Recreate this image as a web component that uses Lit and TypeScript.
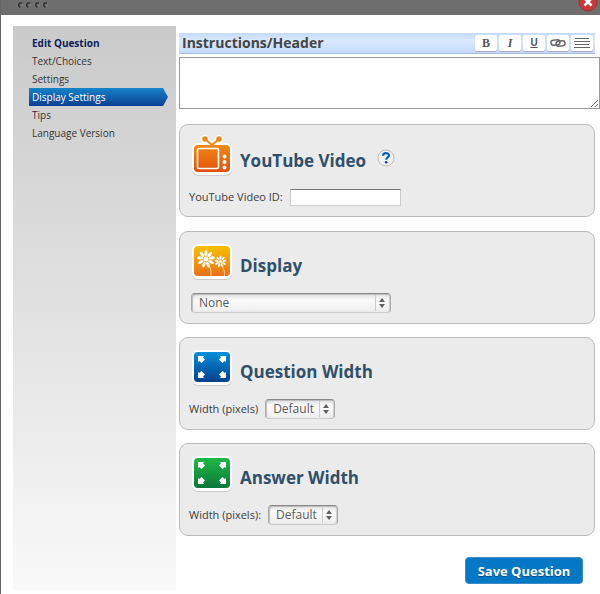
import { LitElement, html, css, svg } from "lit";
import { customElement, property } from "lit/decorators.js";

const arrow = svg`<path d="M0 0h6l-1 1.500 2 2-3.500 3.500-2-2-1.500 1z"/>`;

const tvIcon = html`<svg class="icon" width="42" height="42" viewBox="0 0 42 42" aria-hidden="true">
  <defs>
    <linearGradient id="tv" x1="0" y1="0" x2="0" y2="1">
      <stop offset="0" stop-color="#f08a12" /><stop offset="1" stop-color="#e0500f" />
    </linearGradient>
  </defs>
  <rect x="1" y="10" width="40" height="31" rx="6" fill="#cfcfcf" />
  <g fill="#fff" stroke="#fff">
    <rect x="1.500" y="8.500" width="39" height="31" rx="6" />
    <circle cx="14" cy="4.500" r="4" /><circle cx="28" cy="4.500" r="4" />
    <path d="M14 4l7 7 7-7" stroke-width="6" fill="none" />
  </g>
  <path d="M14 4l7 6 7-6" stroke="#ee8a14" stroke-width="2" fill="none" />
  <circle cx="14" cy="4" r="2.800" fill="#ee8a14" /><circle cx="28" cy="4" r="2.800" fill="#ee8a14" />
  <rect x="3" y="10" width="36" height="27" rx="4" fill="url(#tv)" />
  <rect x="6.500" y="13.500" width="21" height="20" rx="1.500" fill="none" stroke="#fff" stroke-width="1.600" />
  <g fill="#fff"><circle cx="33.500" cy="21.500" r="2" /><circle cx="33.500" cy="27" r="2" /><circle cx="33.500" cy="32.500" r="2" /></g>
</svg>`;

const petals = (n: number, r: number) =>
  Array.from({ length: n }, (_, i) => svg`<ellipse cx="0" cy=${-r * 0.66} rx=${r * 0.17} ry=${r * 0.34} transform="rotate(${(360 / n) * i})"/>`);

const plate = (id: string, top: string, bottom: string, art: unknown) => html`<svg
  class="icon" width="42" height="38" viewBox="0 0 42 38" aria-hidden="true">
  <defs>
    <linearGradient id=${id} x1="0" y1="0" x2="0" y2="1">
      <stop offset="0" stop-color=${top} /><stop offset="1" stop-color=${bottom} />
    </linearGradient>
  </defs>
  <rect x="1" y="2" width="40" height="34" rx="6" fill="#cacaca" />
  <rect x="1" y="0" width="40" height="35" rx="6" fill="#fff" />
  <rect x="3" y="2" width="36" height="30" rx="4" fill="url(#${id})" />
  ${art}
</svg>`;

const flowers = svg`<g fill="#fff">
  <g transform="translate(15 15)">${petals(9, 9)}<circle r="2.500"/></g>
  <g transform="translate(29.500 17.500)">${petals(9, 6)}<circle r="1.500"/></g>
</g>
<path d="M17 20c3 4 3 8 3 12M30.500 22c3 3 3 7 3 10" fill="none" stroke="#fbd9a4"/>`;

const corners = svg`<g fill="#fff">
  <g transform="translate(7 6)">${arrow}</g>
  <g transform="translate(35 6) rotate(90)">${arrow}</g>
  <g transform="translate(35 28) rotate(180)">${arrow}</g>
  <g transform="translate(7 28) rotate(270)">${arrow}</g>
</g>`;

const displayIcon = plate("display", "#f8c000", "#e8701a", flowers);
const questionIcon = plate("question", "#058fdc", "#02408c", corners);
const answerIcon = plate("answer", "#1fb847", "#0c7838", corners);

@customElement("pick-list")
export class PickList extends LitElement {
  @property() value = "";
  @property() label = "";
  @property({ type: Boolean, reflect: true }) wide = false;

  static styles = css`
    :host { display: inline-block; position: relative; width: 70px; }
    :host([wide]) { width: 200px; margin-left: 2px; }
    .select {
      appearance: none;
      display: block;
      box-sizing: border-box;
      width: 100%;
      height: 20px;
      padding: 0 18px 0 7px;
      border: 1px solid #aaa;
      border-top-color: #888;
      border-bottom-color: #ccc;
      border-radius: 4px;
      background: linear-gradient(#e2e2e2, #fbfbfb 35%, #ededed);
      box-shadow: inset 1px 1px 1px #bbb, inset -1px 0 1px #ccc;
      color: #5a5a5a;
      font: 12px/16px "Open Sans", "Noto Sans", sans-serif;
    }
    .mark {
      position: absolute;
      top: 2px;
      right: 2px;
      pointer-events: none;
    }
  `;

  render() {
    return html`<select class="select" aria-label=${this.label}><option>${this.value}</option></select>
      <svg class="mark" width="14" height="16" viewBox="0 0 14 16" aria-hidden="true">
        <path d="M.5 0v16" stroke="#ccc" />
        <path d="M7 3l3 4H4zM7 13l3-4H4z" fill="#5f5f5f" />
      </svg>`;
  }
}

@customElement("app-root")
export class AppRoot extends LitElement {
  static styles = css`
    :host {
      display: flex;
      flex-direction: column;
      box-sizing: border-box;
      min-height: 100vh;
      border-left: 1px solid #666;
      background: #fff;
      color: #3c3c3c;
      font: 11px/18px "Open Sans", "Noto Sans", sans-serif;
      font-kerning: none;
      overflow: hidden;
    }
    .bar {
      display: flex;
      justify-content: space-between;
      height: 15px;
      padding-left: 16px;
      background: #6e6e6e;
    }
    .close {
      width: 20px;
      height: 20px;
      margin: -8px 2px 0 0;
      padding: 0;
      border: 0;
      background: none;
    }
    .body { display: flex; flex: 1; gap: 3px; padding: 11px 5px 4px 12px; }
    .side {
      flex: 0 0 163px;
      box-sizing: border-box;
      padding: 8px 8px 0 16px;
      background: linear-gradient(#cacaca, #f9f9f9);
      font-size: 10px;
      font-kerning: normal;
    }
    .list { margin: 0; padding: 0; list-style: none; }
    .link { display: block; padding-left: 3px; color: #333; text-decoration: none; }
    .lead { color: #0a1f5c; font-weight: 700; }
    .current {
      background: linear-gradient(#1684c8, #0a3f92);
      clip-path: polygon(0 0, calc(100% - 5px) 0, 100% 50%, calc(100% - 5px) 100%, 0 100%);
      color: #fff;
      font-weight: 500;
    }
    .main { flex: 1; min-width: 0; padding-top: 7px; }
    .head {
      display: flex;
      align-items: center;
      justify-content: space-between;
      height: 20px;
      padding: 0 2px 0 3px;
      border-bottom: 1px solid #a9bce6;
      background: linear-gradient(#c5dafa, #dbe9fe 40%, #c3dafb);
    }
    .label { color: #444; font-size: 14px; font-weight: 700; font-kerning: normal; }
    .tools { display: flex; gap: 2px; }
    .tool {
      display: grid;
      place-items: center;
      width: 22px;
      height: 16px;
      padding: 0;
      border: 0;
      border-radius: 2px;
      background: #fff;
      box-shadow: 0 1px 1px #aab;
      color: #555;
      font: 700 12px/14px "Liberation Serif", serif;
    }
    .italic { font-style: italic; }
    .under { text-decoration: underline; font: 700 10px/14px "Liberation Sans", sans-serif; }
    .text {
      display: block;
      box-sizing: border-box;
      width: calc(100% + 5px);
      height: 52px;
      margin: 3px 0 15px;
      border: 1px solid #999;
      border-radius: 0;
      outline: 0;
    }
    .card {
      margin-bottom: 13px;
      padding: 12px 9px 10px;
      border: 1px solid #bbb;
      border-radius: 9px;
      background: #ebebeb;
      box-sizing: border-box;
    }
    .top { display: flex; gap: 7px; height: 43px; padding-left: 2px; margin-bottom: 6px; }
    .icon { flex: none; }
    .title {
      margin: 10px 0 0;
      color: #30506a;
      font-size: 17px;
      line-height: 24px;
      font-weight: 700;
    }
    .video { margin-bottom: 14px; padding-top: 10px; }
    .video .top { height: 49px; margin-bottom: 4px; }
    .video .title { margin-top: 14px; }
    .help {
      width: 18px;
      height: 18px;
      margin: 14px 0 0 4px;
      padding: 0;
      border: 0;
      background: none;
    }
    .row { display: flex; align-items: center; gap: 7px; height: 20px; }
    .video .row { height: 18px; }
    .field {
      box-sizing: border-box;
      width: 111px;
      height: 17px;
      border: 1px solid #ccc;
      border-top-color: #777;
      background: #fff;
    }
    .foot { display: flex; justify-content: flex-end; padding: 8px 12px 0 0; }
    .save {
      width: 118px;
      height: 27px;
      padding: 0;
      border: 1px solid #3a8cc4;
      border-radius: 4px;
      background: #0478c4;
      color: #fff;
      font: 700 13px/20px "Open Sans", "Noto Sans", sans-serif;
      text-shadow: 0 1px 1px #024a80;
    }
  `;

  private items = ["Edit Question", "Text/Choices", "Settings", "Display Settings", "Tips", "Language Version"];

  private card(icon: unknown, title: string, row: unknown) {
    return html`<section class="card">
      <div class="top">${icon}<h2 class="title">${title}</h2></div>
      <div class="row">${row}</div>
    </section>`;
  }

  render() {
    return html`
      <header class="bar">
        <svg width="32" height="12" viewBox="0 0 32 12" aria-hidden="true">
          ${[2, 10, 19, 27].map((x) => svg`<g fill="none" stroke-width="1.500">
            <circle cx=${x + 1} cy="5" r="2" stroke="#7c7c7c"/>
            <path d="M${x + 3} 3.500a2 2 0 1 0-1.500 3.500" stroke="#2c2c2c"/>
          </g>`)}
        </svg>
        <button class="close" aria-label="Close">
          <svg width="20" height="20" viewBox="0 0 20 20">
            <circle cx="10" cy="10" r="9" fill="#c93a36" stroke="#8e3532" />
            <path d="M6.500 6.500l7 7M13.500 6.500l-7 7" stroke="#fff" stroke-width="2.500" />
          </svg>
        </button>
      </header>
      <div class="body">
        <nav class="side">
          <ul class="list">
            ${this.items.map((t, i) => html`<li>
              <a href="#" class="link ${i === 0 ? "lead" : i === 3 ? "current" : ""}">${t}</a>
            </li>`)}
          </ul>
        </nav>
        <main class="main">
          <div class="head">
            <label class="label" for="text">Instructions/Header</label>
            <div class="tools">
              <button class="tool">B</button>
              <button class="tool italic">I</button>
              <button class="tool under">U</button>
              <button class="tool" aria-label="Link">
                <svg width="16" height="10" viewBox="0 0 16 10" fill="none" stroke="#666" stroke-width="1.500">
                  <rect x="1" y="2" width="9" height="5" rx="2.500" transform="rotate(-6 5 5)" />
                  <rect x="6" y="3" width="9" height="5" rx="2.500" transform="rotate(-6 11 5)" />
                </svg>
              </button>
              <button class="tool" aria-label="Justify">
                <svg width="16" height="10" viewBox="0 0 16 10" stroke="#666">
                  <path d="M1 .5h14M0 3.500h16M1 6.500h14M0 9.500h16" />
                </svg>
              </button>
            </div>
          </div>
          <textarea class="text" id="text"></textarea>
          <section class="card video">
            <div class="top">
              ${tvIcon}
              <h2 class="title">YouTube Video</h2>
              <button class="help" aria-label="Help">
                <svg width="18" height="18" viewBox="0 0 18 18">
                  <circle cx="9" cy="9" r="8" fill="#eef1f4" stroke="#bbb" />
                  <path d="M6 6.800c0-3.600 6-3.600 6-.3 0 2-2.800 2-2.800 4.300" fill="none" stroke="#0b62ae" stroke-width="2.200" />
                  <circle cx="9.200" cy="13.300" r="1.300" fill="#0a3f86" />
                </svg>
              </button>
            </div>
            <div class="row">
              <label for="vid">YouTube Video ID:</label>
              <input class="field" id="vid" type="text" />
            </div>
          </section>
          ${this.card(displayIcon, "Display", html`<pick-list wide value="None" label="Display"></pick-list>`)}
          ${this.card(questionIcon, "Question Width", html`<span>Width (pixels)</span><pick-list value="Default" label="Question width in pixels"></pick-list>`)}
          ${this.card(answerIcon, "Answer Width", html`<span>Width (pixels):</span><pick-list value="Default" label="Answer width in pixels"></pick-list>`)}
          <div class="foot"><button class="save">Save Question</button></div>
        </main>
      </div>
    `;
  }
}
